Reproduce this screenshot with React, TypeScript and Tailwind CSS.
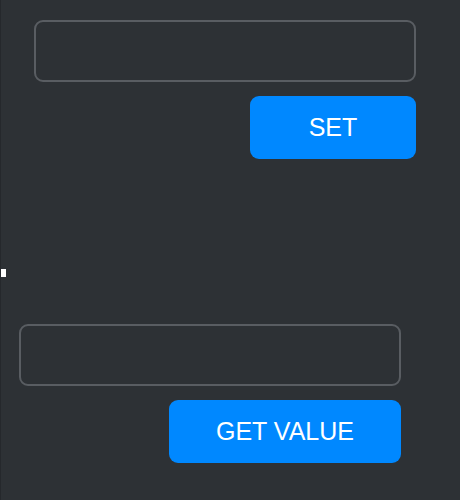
import React, { useState } from 'react';

export default function App() {
  const [draft, setDraft] = useState('');
  const [stored, setStored] = useState('');
  const [shown, setShown] = useState('');

  return (
    <div className="w-[460px] h-[500px] bg-[#2d3135] border-l border-[#25282c] overflow-hidden flex flex-col" style={{ fontFamily: '"Liberation Sans", Arial, sans-serif' }}>
      {/* Setter */}
      <div className="flex flex-col items-end pl-[33px] w-[415px] mt-5">
        <input
          type="text"
          value={draft}
          onChange={(e) => setDraft(e.target.value)}
          className="w-full h-[62px] rounded-[9px] border-2 border-[#595d62] bg-transparent px-4 text-white text-xl outline-none"
        />
        <button
          onClick={() => setStored(draft)}
          className="mt-[14px] w-[166px] h-[63px] rounded-[9px] bg-[#0088ff] text-white text-[25px] leading-none"
        >
          SET
        </button>
      </div>

      <div className="mt-[110px] h-[8px] w-[6px] bg-white -ml-px" />

      {/* Getter */}
      <div className="flex flex-col items-end pl-[18px] w-[400px] mt-[47px]">
        <input
          type="text"
          readOnly
          value={shown}
          className="w-full h-[62px] rounded-[9px] border-2 border-[#595d62] bg-transparent px-4 text-white text-xl outline-none"
        />
        <button
          onClick={() => setShown(stored)}
          className="mt-[14px] w-[232px] h-[63px] rounded-[9px] bg-[#0088ff] text-white text-[25px] leading-none"
        >
          GET VALUE
        </button>
      </div>
    </div>
  );
}
